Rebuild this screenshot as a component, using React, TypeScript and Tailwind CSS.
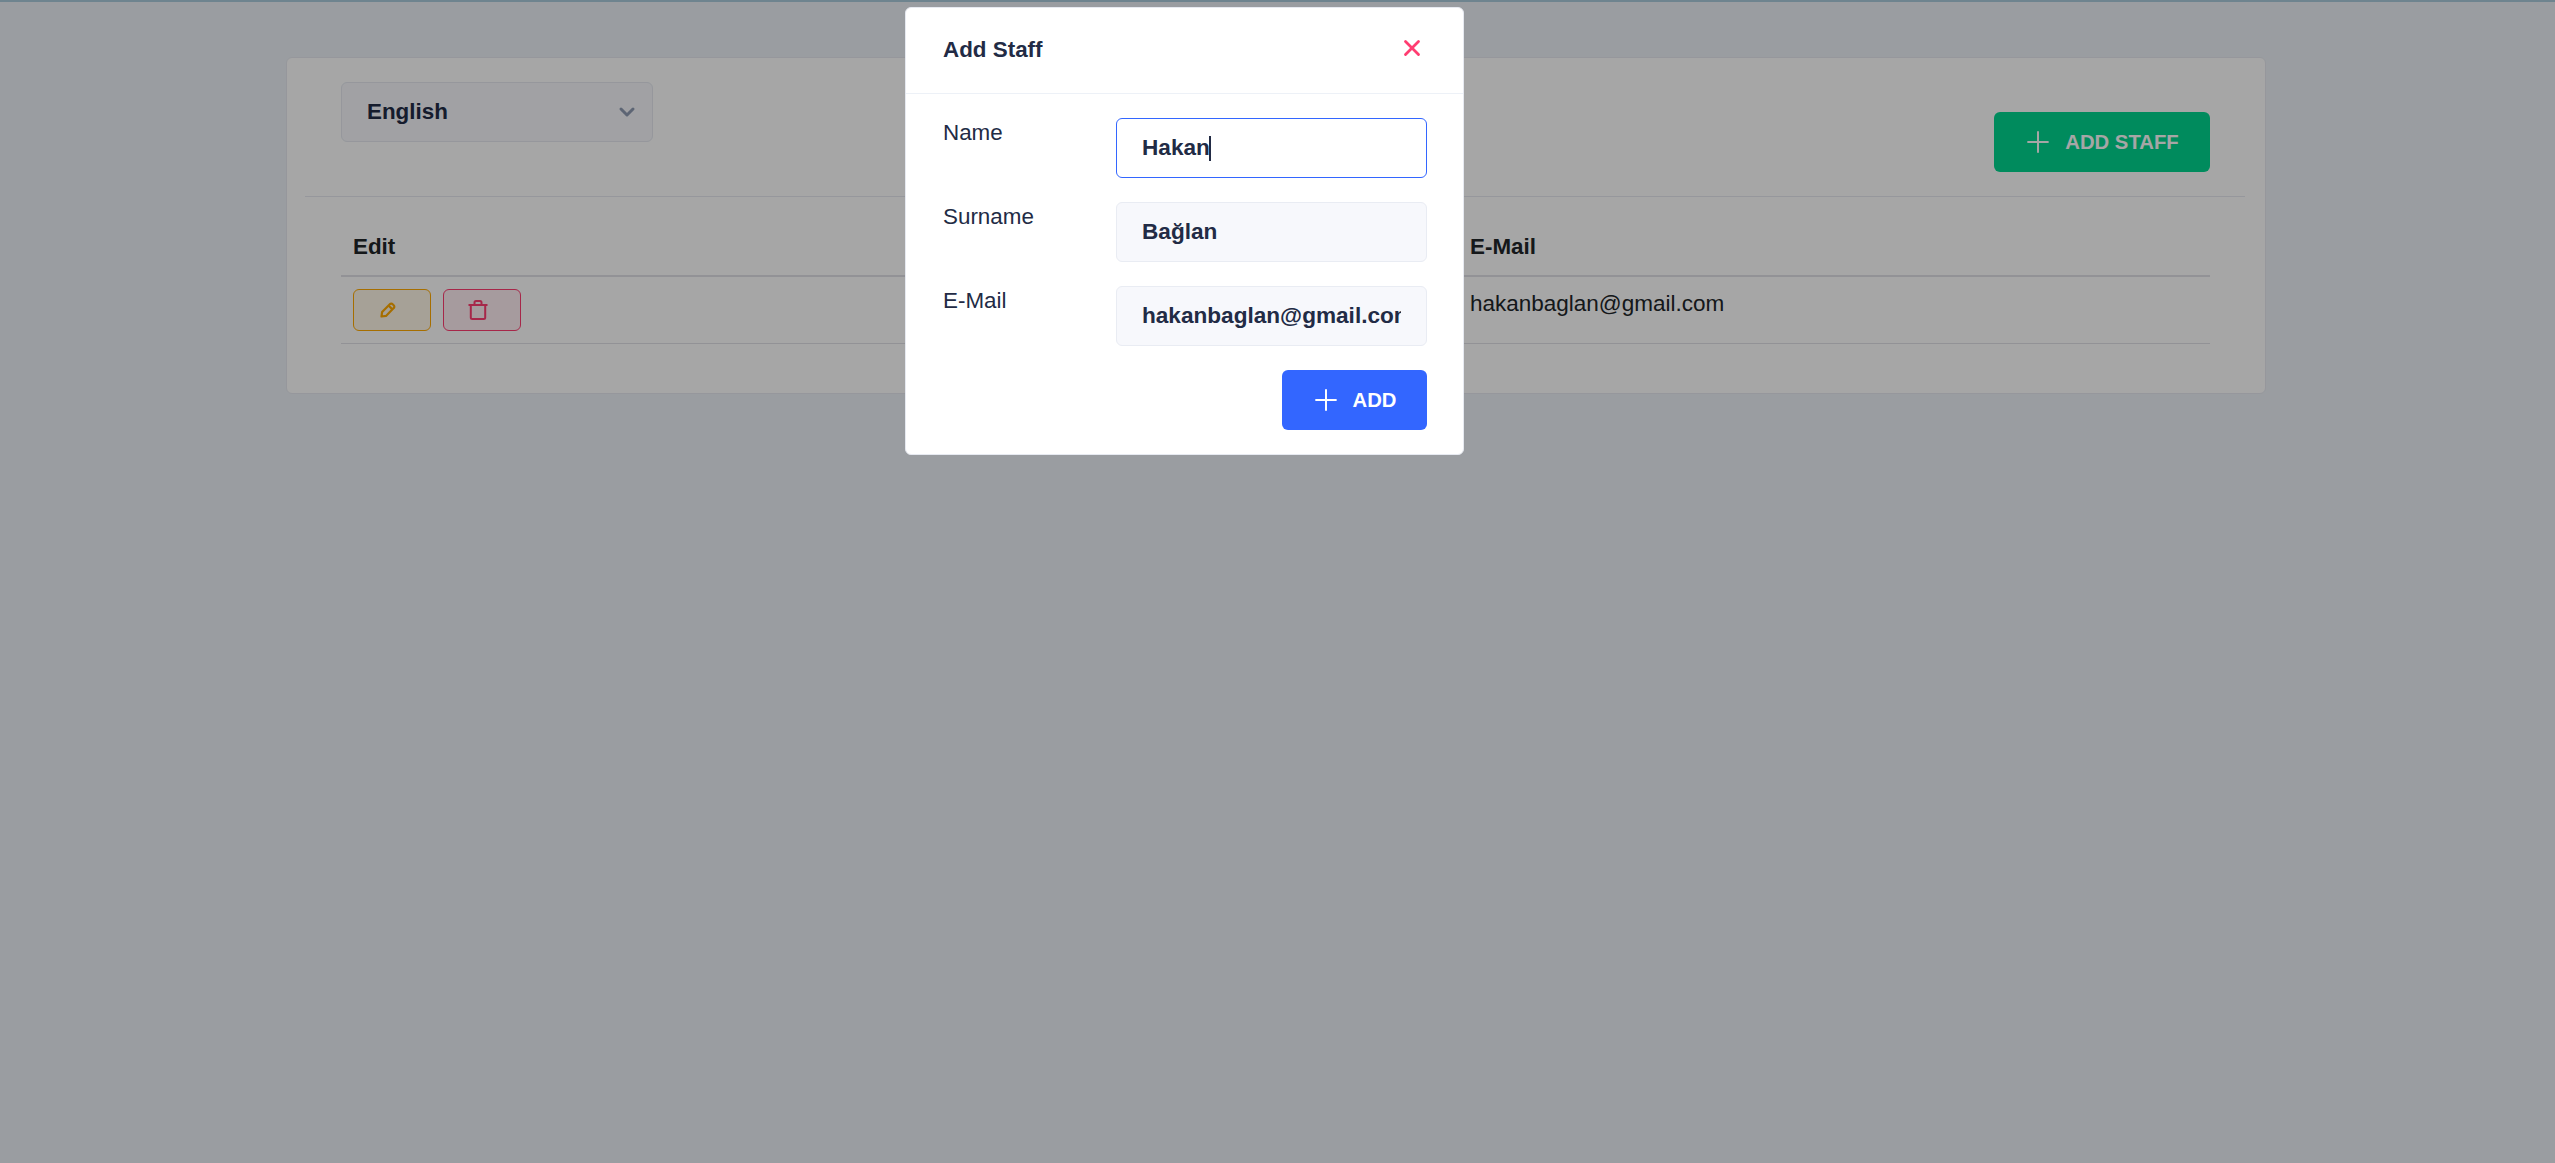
import { ChevronDown, Plus, X } from 'lucide-react';

const font = "font-['Liberation_Sans',Arial,sans-serif]";

function Field({ label, value, focused }: { label: string; value: string; focused?: boolean }) {
  return (
    <div className="flex items-start">
      <label className="-mt-[2px] w-[173px] shrink-0 text-[22.4px] leading-[34px] text-[#222b45]">{label}</label>
      <div
        className={`flex h-[60px] w-[311px] items-center rounded-[6px] border px-[25px] text-[22.6px] font-bold text-[#222b45] ${
          focused ? 'border-[#3366ff] bg-white' : 'border-[#e9ecf3] bg-[#f7f8fc]'
        }`}
      >
        <span className="block overflow-hidden whitespace-pre">{value}</span>
        {focused && <span className="-ml-[1px] h-[25px] w-[2px] shrink-0 bg-[#222b45]" />}
      </div>
    </div>
  );
}

export default function App() {
  return (
    <div className={`relative min-h-screen overflow-hidden bg-[#edf2f8] ${font}`}>
      <div className="h-[2px] bg-[#a9cbdc]" />

      {/* Staff card */}
      <div className="pl-[286px] pr-[289px] pt-[55px]">
        <div className="h-[337px] rounded-[6px] border border-[#e6e9f0] bg-white">
          <div className="ml-[18px] mr-[20px] flex h-[139px] items-start justify-between border-b border-[#e6e9f0] pl-[36px] pr-[35px] pt-[24px]">
            <div className="flex h-[60px] w-[312px] items-center justify-between rounded-[6px] border border-[#e6e9f0] bg-[#f7f8fc] pl-[25px] pr-[13px] text-[22.4px] font-bold text-[#222b45]">
              English
              <ChevronDown className="h-[24px] w-[24px] text-[#8f9bb3]" strokeWidth={3} />
            </div>
            <button className="mt-[30px] flex h-[60px] w-[216px] items-center justify-center gap-[10px] rounded-[6px] bg-[#00d68f] pr-[4px] text-[20.3px] font-bold text-white">
              <Plus className="h-[34px] w-[34px]" strokeWidth={1.4} />
              ADD STAFF
            </button>
          </div>

          <div className="ml-[54px] mr-[55px]">
            <div className="flex h-[80px] items-center border-b-2 border-[#e0e0e6] pl-[12px] pt-[22px] text-[22.4px] font-bold text-[#212529]">
              <span className="w-[1117px]">Edit</span>
              <span>E-Mail</span>
            </div>
            <div className="flex h-[67px] items-start border-b border-[#e0e0e6] pl-[12px] pt-[12px] text-[22.5px] text-[#212529]">
              <div className="flex w-[1117px] gap-[12px]">
                <button className="flex h-[42px] w-[78px] items-center rounded-[6px] border border-[#ffaa00] bg-[#fff7e8] pl-[26px] text-[#ffaa00]">
                  <svg viewBox="0 0 16 16" className="h-[16px] w-[16px]" fill="none" stroke="currentColor" strokeWidth="2.2" strokeLinejoin="round">
                    <path d="M1.5 14.5l.6-4.4L9.8 2.2a2 2 0 0 1 2.9 0l1 1a2 2 0 0 1 0 2.9L6 13.9z" />
                    <path d="M8.8 3.8l3.3 3.3" />
                  </svg>
                </button>
                <button className="flex h-[42px] w-[78px] items-center rounded-[6px] border border-[#ff3d71] bg-[#ffeef3] pl-[24px] text-[#ff3d71]">
                  <svg viewBox="0 0 20 20" className="h-[20px] w-[20px]" fill="none" stroke="currentColor" strokeWidth="2" strokeLinejoin="round">
                    <path d="M0.5 5h19" />
                    <path d="M6.5 5V2.5A1.5 1.5 0 0 1 8 1h4a1.5 1.5 0 0 1 1.5 1.5V5" />
                    <path d="M2.8 5v12.5A1.5 1.5 0 0 0 4.3 19h11.4a1.5 1.5 0 0 0 1.5-1.5V5" />
                  </svg>
                </button>
              </div>
              <span className="leading-[30px]">hakanbaglan@gmail.com</span>
            </div>
          </div>
        </div>
      </div>

      {/* Backdrop */}
      <div className="absolute inset-0 bg-black/35" />

      {/* Add Staff modal */}
      <div className="absolute left-[905px] top-[7px] w-[559px] rounded-[6px] border border-[#e6e9f0] bg-white">
        <div className="flex h-[86px] items-center justify-between border-b border-[#edf1f7] pl-[37px] pr-[38px]">
          <span className="mb-[2px] text-[22.4px] font-bold text-[#222b45]">Add Staff</span>
          <X className="mb-[6px] h-[26px] w-[26px] text-[#ff3d71]" strokeWidth={2.6} />
        </div>
        <div className="flex flex-col gap-[24px] pl-[37px] pr-[36px] pt-[24px]">
          <Field label="Name" value="Hakan" focused />
          <Field label="Surname" value="Bağlan" />
          <Field label="E-Mail" value="hakanbaglan@gmail.com" />
        </div>
        <div className="flex justify-end pb-[24px] pr-[36px] pt-[24px]">
          <button className="flex h-[60px] w-[145px] items-center justify-center gap-[10px] rounded-[6px] bg-[#3366ff] pr-[4px] text-[20.3px] font-bold text-white">
            <Plus className="h-[34px] w-[34px]" strokeWidth={1.4} />
            ADD
          </button>
        </div>
      </div>
    </div>
  );
}
